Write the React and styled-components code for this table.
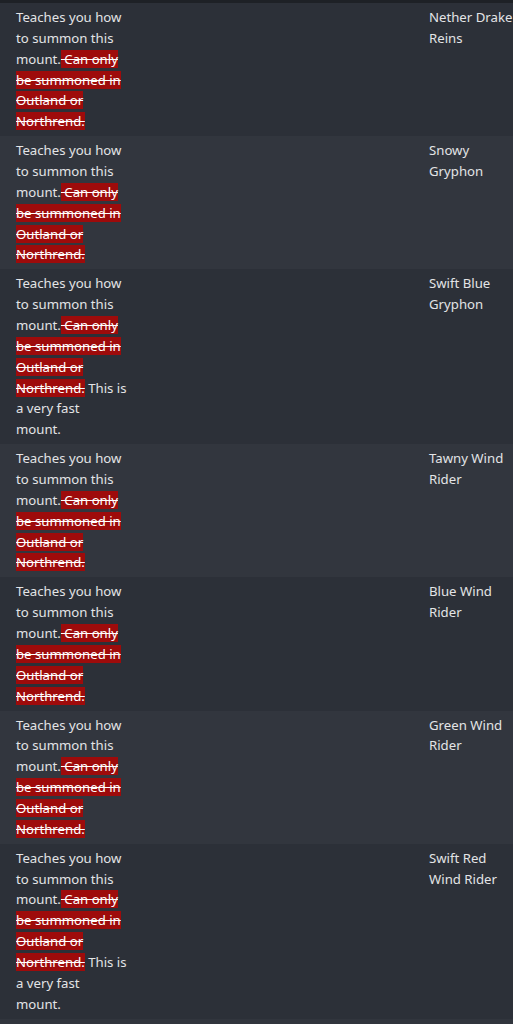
import styled, { createGlobalStyle } from "styled-components";

const GlobalStyle = createGlobalStyle`
  html, body {
    margin: 0;
    padding: 0;
    background: #31353d;
    overflow: hidden;
  }
`;

const Table = styled.div`
  width: 513px;
  font-family: "Noto Sans", "Open Sans", sans-serif;
  font-size: 13.2px;
  line-height: 20.86px;
  color: #e3e4e6;
  border-top: 3px solid #1e2126;
`;

const Row = styled.div`
  display: grid;
  grid-template-columns: 111px 1fr 84px;
  padding: 4px 0 4px 16px;
  background: ${(p) => (p.$alt ? "#32363e" : "#2c3038")};
`;

const Desc = styled.div`
  word-wrap: break-word;
`;

const Removed = styled.del`
  background: #9e0b0b;
  color: #ffffff;
  text-decoration: line-through;
`;

const Name = styled.div`
  grid-column: 3;
  white-space: normal;
`;

// pulled from the mount list diff
const mounts = [
  { name: "Nether Drake Reins", fast: false },
  { name: "Snowy Gryphon", fast: false },
  { name: "Swift Blue Gryphon", fast: true },
  { name: "Tawny Wind Rider", fast: false },
  { name: "Blue Wind Rider", fast: false },
  { name: "Green Wind Rider", fast: false },
  { name: "Swift Red Wind Rider", fast: true },
];

const App = () => {
  return (
    <>
      <GlobalStyle />
      <Table>
        {mounts.map((m, i) => (
          <Row key={m.name} $alt={i % 2 === 1}>
            <Desc>
              Teaches you how to summon this mount.
              <Removed> Can only be summoned in Outland or Northrend.</Removed>
              {m.fast && " This is a very fast mount."}
            </Desc>
            <Name>{m.name}</Name>
          </Row>
        ))}
      </Table>
    </>
  );
};

export default App;
